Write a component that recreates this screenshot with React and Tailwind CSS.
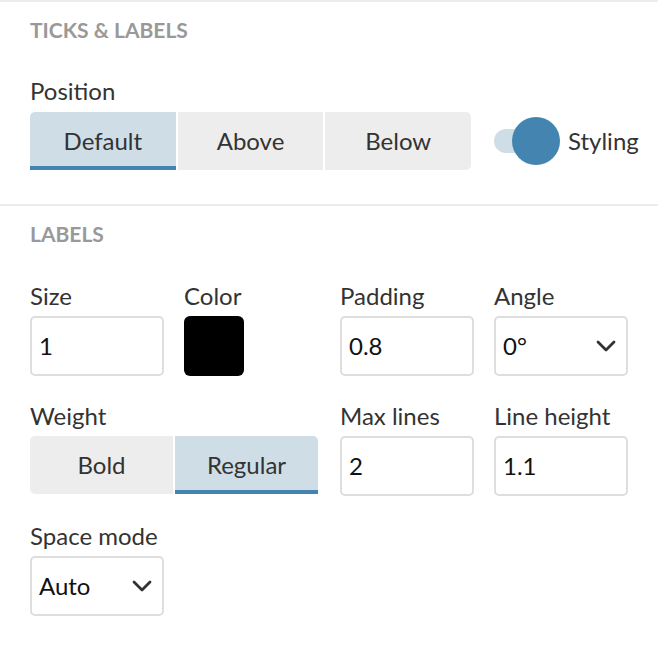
import React from "react";

function Chevron() {
  return (
    <svg width="20" height="12" viewBox="0 0 20 12" fill="none" className="shrink-0">
      <path d="M2 2 L10 10 L18 2" stroke="#333" strokeWidth="2.8" strokeLinecap="round" strokeLinejoin="round" />
    </svg>
  );
}

function Segmented({ options, selected, className }) {
  return (
    <div className={`flex shrink-0 gap-[2px] ${className}`}>
      {options.map((opt, i) => {
        const active = opt === selected;
        const first = i === 0;
        const last = i === options.length - 1;
        let radius = "";
        if (active) {
          if (first) radius = "rounded-tl-[5px]";
          if (last) radius = "rounded-tr-[5px]";
        } else {
          if (first) radius = "rounded-l-[5px]";
          if (last) radius = "rounded-r-[5px]";
        }
        return (
          <button
            key={opt}
            className={`flex-1 h-[58px] flex items-center justify-center text-[24px] text-[#333] ${radius} ${
              active
                ? "bg-[#cfdee6] border-b-4 border-[#4384b0] pt-[4px]"
                : "bg-[#ededed]"
            }`}
          >
            {opt}
          </button>
        );
      })}
    </div>
  );
}

function Label({ children }) {
  return <div className="text-[24px] leading-[28px] text-[#333] whitespace-nowrap">{children}</div>;
}

function TextField({ label, value }) {
  return (
    <div>
      <Label>{label}</Label>
      <div className="mt-[6px] h-[60px] w-[134px] rounded-[5px] border-2 border-[#dedede] flex items-center px-[7px] text-[24px] text-[#111]">
        {value}
      </div>
    </div>
  );
}

function SelectField({ label, value }) {
  return (
    <div>
      <Label>{label}</Label>
      <div className="mt-[6px] h-[60px] w-[134px] rounded-[5px] border-2 border-[#dedede] flex items-center justify-between pl-[7px] pr-[10px] text-[24px] text-[#111]">
        <span>{value}</span>
        <Chevron />
      </div>
    </div>
  );
}

export default function App() {
  return (
    <div className="w-[658px] h-[648px] bg-white overflow-hidden font-['Lato',sans-serif]">
      <section className="border-t-2 border-[#ececec] px-[30px] pt-[16px] pb-[34px]">
        <h3 className="text-[21px] leading-[24px] font-bold text-[#999]">TICKS &amp; LABELS</h3>
        <div className="mt-[35px]">
          <Label>Position</Label>
        </div>
        <div className="mt-[7px] flex items-center">
          <Segmented options={["Default", "Above", "Below"]} selected="Default" className="w-[441px]" />
          <div className="relative shrink-0 ml-[23px] w-[66px] h-[48px] flex items-center">
            <div className="h-[24px] w-[50px] rounded-full bg-[#cfdee6]" />
            <div className="absolute right-0 top-0 h-[48px] w-[48px] rounded-full bg-[#4385b0]" />
          </div>
          <span className="shrink-0 ml-[8px] text-[24px] text-[#333] whitespace-nowrap">Styling</span>
        </div>
      </section>
      <section className="border-t-2 border-[#ececec] px-[30px] pt-[16px]">
        <h3 className="text-[21px] leading-[24px] font-bold text-[#999]">LABELS</h3>
        <div className="mt-[36px] grid grid-cols-[134px_136px_134px_134px] gap-x-[20px] gap-y-[26px]">
          <TextField label="Size" value="1" />
          <div>
            <Label>Color</Label>
            <div className="mt-[6px] h-[60px] w-[60px] rounded-[6px] bg-black" />
          </div>
          <TextField label="Padding" value="0.8" />
          <SelectField label="Angle" value="0°" />

          <div className="col-span-2">
            <Label>Weight</Label>
            <Segmented options={["Bold", "Regular"]} selected="Regular" className="mt-[6px] w-[288px]" />
          </div>
          <TextField label="Max lines" value="2" />
          <TextField label="Line height" value="1.1" />

          <SelectField label="Space mode" value="Auto" />
        </div>
      </section>
    </div>
  );
}
